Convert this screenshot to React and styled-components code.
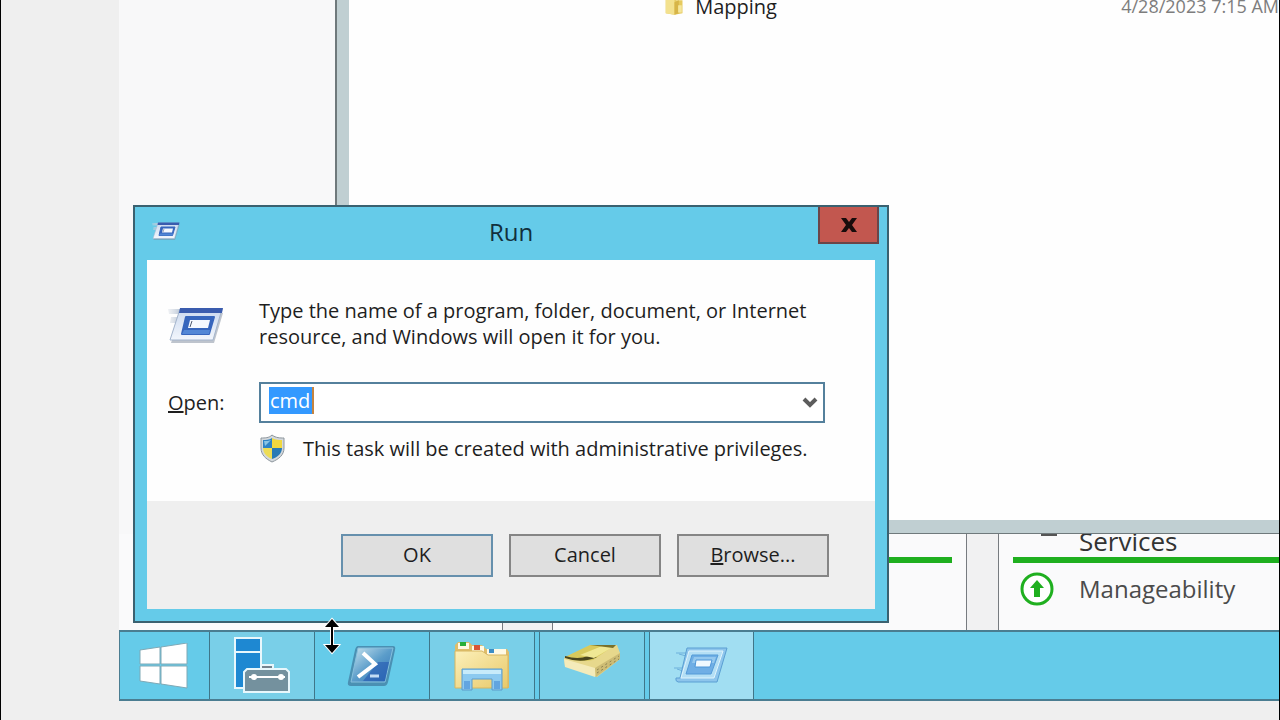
import React, { useEffect, useRef } from "react";
import styled, { createGlobalStyle } from "styled-components";

const GlobalStyle = createGlobalStyle`
  * {
    box-sizing: border-box;
  }

  body {
    margin: 0;
    font-family: "Open Sans", "Noto Sans", sans-serif;
    font-size: 20px;
    color: #1e1e1e;
    background-color: #efefef;
  }

  button,
  input {
    font: inherit;
    color: inherit;
  }
`;

const Screen = styled.div`
  position: relative;
  display: flex;
  flex-direction: column;
  height: 100vh;
  padding: 0 0 19px 118px;
  border: solid #000;
  border-width: 0 1px;
  overflow: hidden;
`;

const Desktop = styled.main`
  display: flex;
  flex-direction: column;
  flex: 1;
  min-height: 0;
`;

const Upper = styled.div`
  display: flex;
  flex: 1;
  min-height: 0;
`;

const SidePane = styled.div`
  width: 216px;
  background-color: #f8f8f9;
`;

const Explorer = styled.section`
  flex: 1;
  min-width: 0;
  border: solid #6f797c;
  border-width: 0 0 1px 2px;
  background-color: #c0cfd2;
  padding: 0 0 13px 12px;
`;

const FileList = styled.div`
  height: 100%;
  background-color: #fefefe;
  overflow: hidden;
`;

const FileRow = styled.div`
  display: flex;
  align-items: center;
  height: 28px;
  margin-top: -8px;
  padding-left: 316px;
  white-space: nowrap;
`;

const FileName = styled.span`
  flex: 0 0 438px;
  padding-left: 12px;
`;

const FileDate = styled.span`
  font-size: 18px;
  color: #7d7d7d;
`;

const Tiles = styled.div`
  display: flex;
  gap: 31px;
  height: 96px;
  background-color: #f1f1f2;
`;

const Tile = styled.section`
  flex: ${props => (props.width ? `0 0 ${props.width}` : "1")};
  min-width: 0;
  margin-left: ${props => props.inset || "0"};
  padding-left: 14px;
  padding-right: ${props => (props.last ? "0" : "14px")};
  border: solid #777b80;
  border-width: 0 ${props => (props.last ? "0" : "1px")} 0
    ${props => (props.first ? "0" : "1px")};
  background-color: #fafafb;
  font-size: 24px;
  line-height: 28px;
  color: #4b4b4b;
  overflow: hidden;
`;

const TileHead = styled.div`
  display: flex;
  align-items: flex-end;
  gap: 22px;
  height: 29px;
  padding-left: 28px;
  border-bottom: 6px solid #1faf1f;

  span {
    height: 28px;
    margin-bottom: 2px;
    font-size: 26px;
    color: #333;
  }
`;

const Dash = styled.i`
  align-self: flex-start;
  width: 16px;
  height: 2px;
  background-color: #555;
`;

const TileRow = styled.div`
  display: flex;
  align-items: center;
  gap: 25px;
  padding: 9px 7px;
`;

const Taskbar = styled.nav`
  display: flex;
  flex: 0 0 71px;
  border: solid #4a7d91;
  border-width: 2px 0 2px 1px;
  background-color: #65cbe9;
`;

const TaskButton = styled.button`
  display: flex;
  align-items: center;
  justify-content: center;
  width: ${props => props.width};
  margin-right: ${props => props.gap || "0"};
  padding: 0;
  border: solid #3f7689;
  border-width: 0 1px 0 ${props => (props.edge ? "1px" : "0")};
  background-color: ${props => props.tone || "transparent"};
`;

const Dialog = styled.div`
  position: absolute;
  top: 205px;
  left: 132px;
  width: 756px;
  border: 2px solid #3a6170;
  background-color: #65cbe9;
  padding: 0 12px 12px;
`;

const TitleBar = styled.header`
  display: flex;
  align-items: flex-start;
  justify-content: space-between;
  height: 53px;
  padding-left: 5px;
`;

const TitleIcon = styled.span`
  display: flex;
  width: 52px;
  padding-top: 15px;
`;

const Title = styled.h1`
  margin: 0;
  font-size: 24px;
  font-weight: 400;
  line-height: 50px;
  color: #12303c;
`;

const Close = styled.button`
  display: flex;
  align-items: center;
  justify-content: center;
  width: 61px;
  height: 37px;
  margin-right: -4px;
  padding: 0;
  border: 2px solid #6b4548;
  border-top: 0;
  background-color: #c2574f;
`;

const Content = styled.div`
  display: grid;
  grid-template-columns: 91px 1fr;
  align-items: center;
  padding: 38px 50px 37px 21px;
  background-color: #fefefe;
`;

const ContentIcon = styled.span`
  display: flex;
  padding-top: 4px;
`;

const Message = styled.p`
  margin: 0;
  line-height: 26px;
`;

const OpenLabel = styled.label`
  margin: 31px 0 10px;
`;

const Combo = styled.div`
  display: flex;
  align-items: center;
  height: 41px;
  margin: 32px 0 10px;
  padding: 0 5px 4px 8px;
  border: 2px solid #54809c;
  background-color: #fff;
`;

const ComboInput = styled.input`
  field-sizing: content;
  min-width: 45px;
  max-width: 100%;
  height: 27px;
  padding: 0 1px;
  border: 0;
  border-right: 2px solid #c6843f;
  outline: none;
  background-color: #3399ff;
  color: #fff;
  line-height: 27px;
  caret-color: transparent;

  &::selection {
    background-color: #3399ff;
    color: #fff;
  }
`;

const ComboArrow = styled.button`
  display: flex;
  margin-left: auto;
  padding: 4px 0 0;
  border: 0;
  background-color: transparent;
`;

const Note = styled.p`
  grid-column: 2;
  display: flex;
  align-items: center;
  gap: 17px;
  margin: 0;
  line-height: 31px;
`;

const Actions = styled.footer`
  display: flex;
  justify-content: flex-end;
  gap: 16px;
  padding: 33px 46px 32px;
  background-color: #efefef;
`;

const Action = styled.button`
  width: 152px;
  height: 43px;
  padding: 0 0 2px;
  border: 2px solid ${props => (props.primary ? "#6690ad" : "#858585")};
  background-color: #dfdfdf;
`;

const Pointer = styled.svg`
  position: absolute;
  top: 617px;
  left: 321px;
`;

const RunIcon = ({ width, height }) => (
  <svg width={width} height={height} viewBox="0 0 56 38" aria-hidden="true">
    <defs>
      <linearGradient id="trail" x1="0" y1="0" x2="1" y2="0">
        <stop offset="0" stopColor="#cfd6df" stopOpacity="0.3" />
        <stop offset="1" stopColor="#bac6d6" />
      </linearGradient>
      <linearGradient id="frame" x1="0" y1="0" x2="0" y2="1">
        <stop offset="0" stopColor="#cbd9ef" />
        <stop offset="1" stopColor="#f2f6fc" />
      </linearGradient>
    </defs>
    <path d="M0 2H13L12 7H1ZM3 10H10L8 16H2Z" fill="url(#trail)" />
    <path d="M13 6H55L46 36H3Z" fill="#7e899b" opacity="0.5" />
    <path d="M12 2H54L45 33H2Z" fill="url(#frame)" stroke="#a3b4cc" />
    <path d="M12 1H55L54 6H11Z" fill="#3a5cae" />
    <path
      d="M18 10H46L41 27H14Z"
      fill="#3766bd"
      stroke="#3766bd"
      strokeWidth="2"
      strokeLinejoin="round"
    />
    <path d="M16 23H42L41 27H14Z" fill="#5287d6" />
    <path d="M22 13H42L40 21H20Z" fill="#f5f9ff" />
    <path d="M24 14L22 20" stroke="#4f5a70" strokeWidth="1" />
  </svg>
);

const RunTaskIcon = () => (
  <svg width="56" height="38" viewBox="0 0 56 38" aria-hidden="true">
    <path
      d="M2 6H14M5 7L12 9M0 21H10M3 22L9 24"
      fill="none"
      stroke="#6db0dc"
      strokeWidth="1"
    />
    <path
      d="M13 1H53L43 35H4Q1 34 2 31H6Z"
      fill="#8dc5ec"
      stroke="#5a9fd3"
      strokeLinejoin="round"
    />
    <path
      d="M15 4H49L40 31H7Z"
      fill="#b4dff5"
      stroke="#e0f4fc"
      strokeLinejoin="round"
    />
    <path
      d="M18 8H44L37 27H12Z"
      fill="#6faee5"
      stroke="#559bd7"
      strokeLinejoin="round"
    />
    <path d="M20 10H42L40 16H18Z" fill="#94c8ee" />
    <path d="M22 13H38L36 20H21Z" fill="#f0f9ff" stroke="#4f96d8" />
  </svg>
);

const ShieldIcon = () => (
  <svg width="27" height="29" viewBox="0 0 27 29" aria-hidden="true">
    <path
      d="M13 1C17 4 21 4 25 4V14C25 21 20 25 13 28C7 25 2 21 2 14V4C6 4 10 4 13 1Z"
      fill="#d3d8dc"
      stroke="#8d969d"
    />
    <path d="M13 4C10 6 7 6 4 6V14H13Z" fill="#2e83c5" />
    <path d="M13 4C17 6 20 6 23 6V14H13Z" fill="#f0d83f" />
    <path d="M4 14H13V25C8 23 4 19 4 14Z" fill="#eddc55" />
    <path d="M13 14H23C23 19 19 23 13 25Z" fill="#2779b5" />
    <path d="M5 7C8 7 10 7 12 6L6 12Z" fill="#8ac5e5" />
  </svg>
);

const WindowsIcon = () => (
  <svg width="52" height="46" viewBox="0 0 52 46" aria-hidden="true">
    <g fill="#fff" stroke="#7fa9b6" strokeWidth="1">
      <path d="M1 7L21 4V21H1Z" />
      <path d="M22 4L48 0V21H22Z" />
      <path d="M1 23H21V41L1 38Z" />
      <path d="M22 23H48V45L22 41Z" />
    </g>
  </svg>
);

const ServerIcon = () => (
  <svg width="58" height="58" viewBox="0 0 58 58" aria-hidden="true">
    <path d="M2 1H28V51H2Z" fill="#1e88d2" stroke="#e8f7fc" strokeWidth="2" />
    <path d="M2 15H28" stroke="#e8f7fc" strokeWidth="2" />
    <path d="M28 33V28H40V33" fill="#74838f" stroke="#e8f7fc" strokeWidth="2" />
    <path
      d="M14 32H53L56 35V55H11V35Z"
      fill="#74919e"
      stroke="#e8f7fc"
      strokeWidth="2"
    />
    <path d="M16 40H52" stroke="#fff" strokeWidth="2" />
    <circle cx="21" cy="40" r="3" fill="#fff" />
    <circle cx="48" cy="40" r="3" fill="#fff" />
  </svg>
);

const PowerShellIcon = () => (
  <svg width="52" height="44" viewBox="0 0 52 44" aria-hidden="true">
    <defs>
      <linearGradient id="ps" x1="0" y1="0" x2="1" y2="1">
        <stop offset="0" stopColor="#c8e4ef" />
        <stop offset="0.500" stopColor="#5b9dca" />
        <stop offset="1" stopColor="#2f70b8" />
      </linearGradient>
    </defs>
    <path
      d="M12 2H47Q50 2 49 6L42 38Q41 42 38 42H5Q1 42 2 38L9 6Q10 2 12 2Z"
      fill="#4a90b3"
    />
    <path d="M12 4H47L39 38H5Z" fill="url(#ps)" stroke="#86bfdc" />
    <path d="M32 18H43L39 37H17Z" fill="#2459b1" opacity="0.6" />
    <path d="M17 9L29 20L12 33" fill="none" stroke="#fff" strokeWidth="4" />
    <path d="M24 32H33" stroke="#c3dcf4" strokeWidth="3" />
  </svg>
);

const FolderIcon = () => (
  <svg width="58" height="50" viewBox="0 0 58 50" aria-hidden="true">
    <defs>
      <linearGradient id="folder" x1="0" y1="0" x2="1" y2="1">
        <stop offset="0" stopColor="#fcf0ba" />
        <stop offset="1" stopColor="#e8c969" />
      </linearGradient>
    </defs>
    <path d="M2 4L5 1H16L19 4H29L33 8H54L56 11V47H2Z" fill="#dfbd6b" />
    <path d="M5 2H16V8H5ZM19 5H31V11H19ZM34 8H53V14H34Z" fill="#fff9e4" />
    <path d="M7 1H13V5H7Z" fill="#28ae38" />
    <path d="M21 4H27V9H21Z" fill="#d95435" />
    <path d="M36 8H41V12H36Z" fill="#3c8ec6" />
    <path d="M2 10H29L35 14H55V47H2Z" fill="url(#folder)" stroke="#d7b660" />
    <path
      d="M9 28H49V49H39V38H19V49H9Z"
      fill="#8ccaf0"
      stroke="#5c9cca"
      strokeWidth="1"
    />
    <path d="M10 29H48V33H10Z" fill="#c7ebfa" />
    <path d="M11 40H17V48H11ZM41 40H47V48H41Z" fill="#62a5e0" />
  </svg>
);

const NotesIcon = () => (
  <svg width="58" height="46" viewBox="0 0 58 46" aria-hidden="true">
    <path d="M1 15L28 2H54L57 10V16L34 34L2 23Z" fill="#e7d88c" />
    <path d="M1 16L32 25V34L2 24Z" fill="#f4ebba" />
    <path d="M32 25L57 10V16L33 34Z" fill="#cdbc74" />
    <path d="M34 27L56 13M34 30L56 16" stroke="#8a8050" strokeDasharray="2 3" />
    <path d="M2 14L27 2H52L30 17Q13 20 2 14Z" fill="#d8ca5c" />
    <path d="M2 13Q15 17 25 13L34 14Q19 21 2 15Z" fill="#4b471e" />
    <path d="M17 12L39 3L50 4L31 15Z" fill="#f0e894" />
    <path d="M27 2H53L50 5Z" fill="#79702b" />
  </svg>
);

const MiniFolder = () => (
  <svg width="25" height="26" viewBox="0 0 25 26" aria-hidden="true">
    <path d="M1 3H12L15 5H24V23L13 25L1 23Z" fill="#e6ca5e" />
    <path d="M1 4L13 2V25L1 23Z" fill="#f3e18e" />
    <path d="M13 8L19 5V23L13 25Z" fill="#d7b548" />
    <path d="M18 12H23V22H18Z" fill="#f5e69c" />
  </svg>
);

const UpIcon = () => (
  <svg width="34" height="34" viewBox="0 0 34 34" aria-hidden="true">
    <circle cx="17" cy="17" r="15" fill="#fff" stroke="#1faf1f" strokeWidth="3" />
    <path d="M17 8L24 16H20V25H14V16H10Z" fill="#1faf1f" />
  </svg>
);

const App = () => {
  const command = useRef(null);

  useEffect(() => {
    command.current.focus();
    command.current.select();
  }, []);

  return (
    <Screen>
      <GlobalStyle />
      <Desktop>
        <Upper>
          <SidePane />
          <Explorer>
            <FileList>
              <FileRow>
                <MiniFolder />
                <FileName>Mapping</FileName>
                <FileDate>4/28/2023 7:15 AM</FileDate>
              </FileRow>
            </FileList>
          </Explorer>
        </Upper>
        <Tiles>
          <Tile width="384px" first />
          <Tile width="415px" inset="18px">
            <TileHead />
          </Tile>
          <Tile last>
            <TileHead>
              <Dash />
              <span>Services</span>
            </TileHead>
            <TileRow>
              <UpIcon />
              Manageability
            </TileRow>
          </Tile>
        </Tiles>
      </Desktop>

      <Taskbar>
        <TaskButton width="90px" aria-label="Start">
          <WindowsIcon />
        </TaskButton>
        <TaskButton width="105px" tone="#79cfe8" aria-label="Server Manager">
          <ServerIcon />
        </TaskButton>
        <TaskButton width="115px" aria-label="Windows PowerShell">
          <PowerShellIcon />
        </TaskButton>
        <TaskButton width="105px" gap="4px" tone="#79cfe8" aria-label="File Explorer">
          <FolderIcon />
        </TaskButton>
        <TaskButton width="106px" gap="4px" edge tone="#79cfe8" aria-label="Notes">
          <NotesIcon />
        </TaskButton>
        <TaskButton width="105px" edge tone="#a1def2" aria-label="Run">
          <RunTaskIcon />
        </TaskButton>
      </Taskbar>

      <Dialog role="dialog" aria-labelledby="run-title">
        <TitleBar>
          <TitleIcon>
            <RunIcon width="28" height="19" />
          </TitleIcon>
          <Title id="run-title">Run</Title>
          <Close aria-label="Close">
            <svg width="18" height="16" viewBox="0 0 18 16" aria-hidden="true">
              <path
                d="M1 1H6L9 5L12 1H17L12 8L17 15H12L9 11L6 15H1L6 8Z"
                fill="#180c0c"
              />
            </svg>
          </Close>
        </TitleBar>
        <Content>
          <ContentIcon>
            <RunIcon width="56" height="38" />
          </ContentIcon>
          <Message>
            Type the name of a program, folder, document, or Internet resource,
            and Windows will open it for you.
          </Message>
          <OpenLabel htmlFor="command">
            <u>O</u>pen:
          </OpenLabel>
          <Combo>
            <ComboInput id="command" ref={command} defaultValue="cmd" />
            <ComboArrow aria-label="Show recent commands">
              <svg width="16" height="14" viewBox="0 0 16 14" aria-hidden="true">
                <path
                  d="M2 3L8 9L14 3"
                  fill="none"
                  stroke="#5c5c5c"
                  strokeWidth="4"
                />
              </svg>
            </ComboArrow>
          </Combo>
          <Note>
            <ShieldIcon />
            This task will be created with administrative privileges.
          </Note>
        </Content>
        <Actions>
          <Action primary>OK</Action>
          <Action>Cancel</Action>
          <Action>
            <u>B</u>rowse...
          </Action>
        </Actions>
      </Dialog>

      <Pointer width="20" height="38" viewBox="0 0 20 38" aria-hidden="true">
        <path
          d="M10 2L17 10H11V28H17L10 36L3 28H9V10H3Z"
          fill="#000"
          stroke="#fff"
          strokeWidth="2"
          paintOrder="stroke"
        />
      </Pointer>
    </Screen>
  );
};

export default App;
